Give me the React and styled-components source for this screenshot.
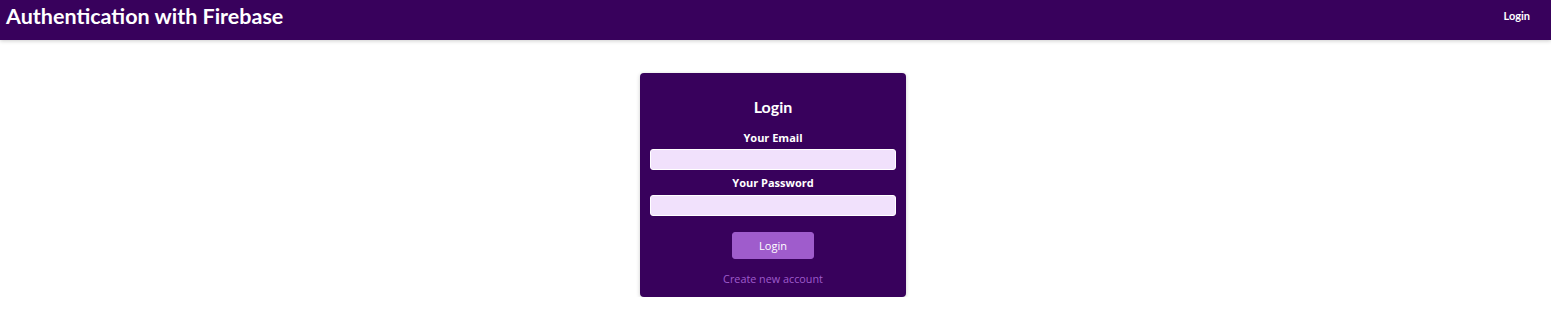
import React from 'react';
import styled, { createGlobalStyle } from 'styled-components';

const GlobalStyle = createGlobalStyle`
  * { box-sizing: border-box; }
  body {
    margin: 0;
    font-family: Lato, 'Noto Sans', sans-serif;
    background: #ffffff;
  }
`;

const Header = styled.header`
  height: 40px;
  background: #38015c;
  display: flex;
  align-items: center;
  justify-content: space-between;
  padding: 0 21px 0 6px;
  box-shadow: 0 1px 4px rgba(0, 0, 0, 0.2);
`;

const Logo = styled.div`
  font-size: 21.5px;
  font-weight: 700;
  color: #ffffff;
  margin-top: -9px;
`;

const NavLink = styled.a`
  font-size: 11px;
  font-weight: 700;
  color: #ffffff;
  text-decoration: none;
  margin-top: -10px;
  cursor: pointer;
`;

const Main = styled.main`
  display: flex;
  justify-content: center;
  padding: 33px 0 0 0;
  margin-left: -5px;
`;

const Card = styled.section`
  width: 266px;
  height: 224px;
  background: #38015c;
  border-radius: 4px;
  box-shadow: 0 1px 4px rgba(0, 0, 0, 0.2);
  padding: 24px 10px 0;
  display: flex;
  flex-direction: column;
  align-items: center;
  color: #ffffff;
`;

const Title = styled.h1`
  margin: 0 0 14px;
  font-size: 16px;
  font-weight: 700;
`;

const Field = styled.div`
  width: 100%;
  display: flex;
  flex-direction: column;
  align-items: center;
  margin-bottom: ${({ $gap }) => $gap || '0'};
`;

const Label = styled.label`
  font-family: 'Open Sans', sans-serif;
  font-size: 11px;
  font-weight: 700;
  margin-bottom: ${({ $space }) => $space || '4px'};
`;

const Input = styled.input`
  width: 100%;
  height: 21px;
  background: #f1e1fc;
  border: 1px solid #ffffff;
  border-radius: 3px;
  outline: none;
`;

const Button = styled.button`
  margin-top: 16px;
  width: 82px;
  height: 27px;
  background: #9f5ccc;
  border: 1px solid #9f5ccc;
  border-radius: 3px;
  color: #ffffff;
  font-family: 'Open Sans', sans-serif;
  font-size: 11px;
  cursor: pointer;
`;

const Toggle = styled.button`
  margin-top: 11px;
  background: transparent;
  border: none;
  color: #9f5ccc;
  font-family: 'Open Sans', sans-serif;
  font-size: 10.8px;
  cursor: pointer;
`;

export default function App() {
  return (
    <>
      <GlobalStyle />
      <Header>
        <Logo>Authentication with Firebase</Logo>
        <NavLink>Login</NavLink>
      </Header>
      <Main>
        <Card>
          <Title>Login</Title>
          <Field $gap="5px">
            <Label htmlFor="email">Your Email</Label>
            <Input id="email" type="email" />
          </Field>
          <Field>
            <Label htmlFor="password" $space="5px">Your Password</Label>
            <Input id="password" type="password" />
          </Field>
          <Button>Login</Button>
          <Toggle>Create new account</Toggle>
        </Card>
      </Main>
    </>
  );
}
